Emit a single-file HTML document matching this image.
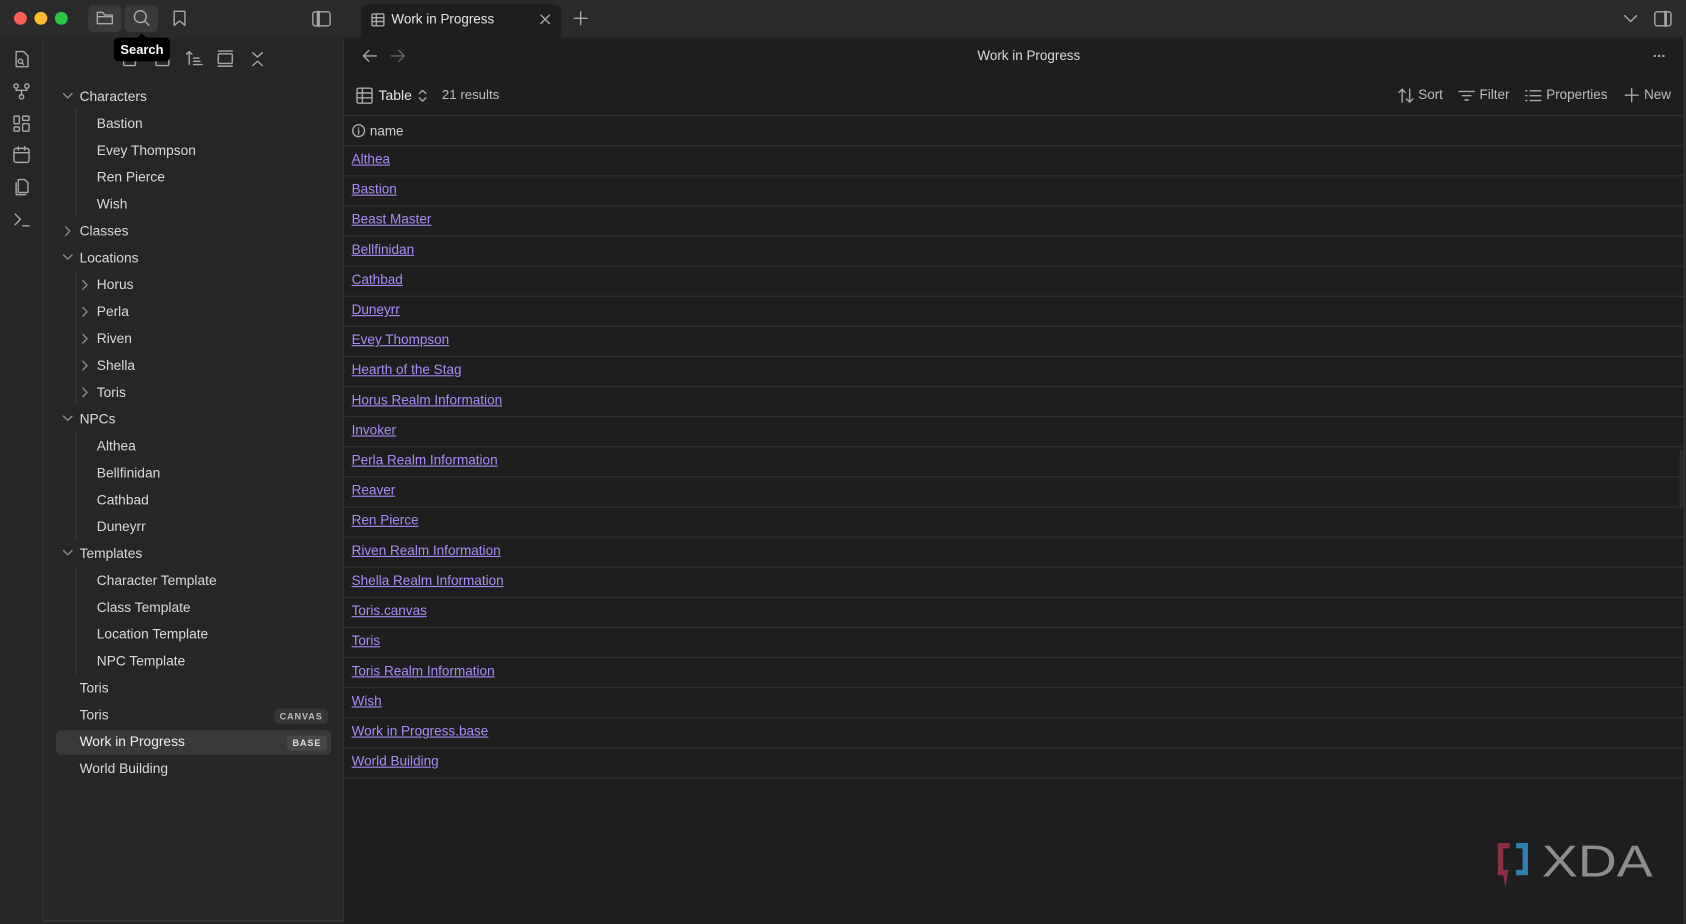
<!DOCTYPE html>
<html><head><meta charset="utf-8"><style>
html,body{margin:0;padding:0;background:#1e1e1e;width:1686px;height:924px;overflow:hidden}
#w{position:absolute;left:0;top:0;width:1568px;height:859px;transform:scale(1.07526);transform-origin:0 0;font-family:"Liberation Sans",sans-serif;color:#dadada;font-size:13px;background:#262626}
.a{position:absolute}
svg{position:absolute;fill:none;stroke:#a8a8a8;stroke-width:1.3;stroke-linecap:round;stroke-linejoin:round}
.tree div{position:absolute;height:25px;line-height:25px;white-space:nowrap;font-size:12.8px}
.chev{stroke:#8a8a8a}
.row{position:absolute;left:320px;width:1246px;height:27px;border-bottom:1px solid #333}
.row a{position:absolute;left:7px;top:5px;color:#a98cf7;text-decoration:underline;font-size:12.6px}
.badge{position:absolute;font-size:8.5px;font-weight:bold;letter-spacing:.8px;color:#bbb;background:#363636;border-radius:4px;padding:2px 5px}
</style></head><body><div id="w">
<div class="a" style="left:0;top:0;width:1568px;height:35px;background:#2a2a2a"></div>
<div class="a" style="left:13px;top:11px;width:12px;height:12px;border-radius:6px;background:#fe5f57"></div>
<div class="a" style="left:32px;top:11px;width:12px;height:12px;border-radius:6px;background:#febc2e"></div>
<div class="a" style="left:51px;top:11px;width:12px;height:12px;border-radius:6px;background:#28c840"></div>
<div class="a" style="left:82px;top:5px;width:31px;height:25px;border-radius:5px;background:#3a3a3a"></div>
<div class="a" style="left:116px;top:5px;width:31px;height:25px;border-radius:5px;background:#3a3a3a"></div>
<svg style="left:89px;top:9px" width="17" height="16"><path d="M1.5 3.5v9.5h14v-8h-7l-2-2.5h-5zM1.5 6.5h14"/></svg>
<svg style="left:123px;top:8px" width="17" height="17"><circle cx="7.5" cy="7.5" r="5.5"/><path d="M11.5 11.5l4 4"/></svg>
<svg style="left:160px;top:9px" width="14" height="16"><path d="M2 1.5h10v13l-5-4-5 4z"/></svg>
<svg style="left:290px;top:10px" width="18" height="15"><rect x="1" y="1" width="16" height="13" rx="2"/><path d="M6 1v13" stroke-width="3"/></svg>
<div class="a" style="left:336px;top:4px;width:186px;height:31px;background:#1e1e1e;border-radius:6px 6px 0 0"></div>
<svg style="left:345px;top:12px" width="13" height="13"><rect x="1" y="1" width="11" height="11" rx="1"/><path d="M1 4.5h11M1 8h11M5 1v11"/></svg>
<div class="a" style="left:364px;top:11px;font-size:12.5px;color:#e6e6e6">Work in Progress</div>
<svg style="left:501px;top:12px" width="12" height="12"><path d="M2 2l8 8M10 2l-8 8"/></svg>
<svg style="left:533px;top:10px" width="14" height="14"><path d="M7 1v12M1 7h12"/></svg>
<svg style="left:1510px;top:13px" width="13" height="9"><path d="M1 1.5l5.5 5.5 5.5-5.5"/></svg>
<svg style="left:1538px;top:10px" width="17" height="15"><rect x="1" y="1" width="15" height="13" rx="2"/><path d="M11 1v13" stroke-width="2.5"/></svg>
<div class="a" style="left:0;top:35px;width:40px;height:824px;background:#262626;border-right:1px solid #333"></div>
<svg style="left:11px;top:46px" width="18" height="18"><path d="M4 2h7l4 4v10H4z"/><circle cx="8" cy="11" r="2"/><path d="M9.5 12.5l1.5 1.5"/></svg>
<svg style="left:11px;top:76px" width="18" height="18"><circle cx="4" cy="4" r="2"/><circle cx="14" cy="4" r="2"/><circle cx="9" cy="14" r="2"/><path d="M4 6v2h10V6M9 8v4"/></svg>
<svg style="left:11px;top:106px" width="18" height="18"><rect x="2" y="2" width="5" height="7" rx="1"/><rect x="10" y="2" width="6" height="4" rx="1"/><rect x="2" y="12" width="5" height="4" rx="1"/><rect x="10" y="9" width="6" height="7" rx="1"/></svg>
<svg style="left:11px;top:135px" width="18" height="18"><rect x="2" y="3" width="14" height="13" rx="2"/><path d="M2 7h14M6 1.5v3M12 1.5v3"/></svg>
<svg style="left:11px;top:165px" width="18" height="18"><path d="M6 2h6l3 3v9H6z"/><path d="M4 5v11h9"/></svg>
<svg style="left:11px;top:195px" width="18" height="18"><path d="M3 4l5 5-5 5M10 15h6"/></svg>
<div class="a" style="left:41px;top:35px;width:278px;height:821px;background:#262626;border-right:1px solid #333;border-bottom:1px solid #3a3a3a"></div>
<svg style="left:113px;top:46px" width="16" height="16"><rect x="2" y="2" width="11" height="13" rx="1"/></svg>
<svg style="left:143px;top:46px" width="16" height="16"><rect x="2" y="2" width="12" height="13" rx="1"/></svg>
<svg style="left:172px;top:46px" width="17" height="17"><path d="M4 14V2M1.5 4.5L4 2l2.5 2.5M8 8h5M8 11h6M8 14h8"/></svg>
<svg style="left:201px;top:46px" width="17" height="17"><rect x="2" y="4" width="13" height="9" rx="1"/><path d="M2 1.5h13M2 15.5h13"/></svg>
<svg style="left:232px;top:47px" width="15" height="16"><path d="M3 2l4.5 4 4.5-4M3 14l4.5-4 4.5 4"/></svg>
<div class="a" style="left:106px;top:35px;width:52px;height:22px;background:#000;border-radius:4px;color:#fff;font-size:12px;font-weight:bold;text-align:center;line-height:22px">Search</div>
<div class="a" style="left:127px;top:31px;width:0;height:0;border-left:5px solid transparent;border-right:5px solid transparent;border-bottom:5px solid #000"></div>
<div class="a" style="left:52px;top:679px;width:256px;height:23px;background:#393939;border-radius:5px"></div>
<div class="a" style="left:70px;top:100px;width:1px;height:102px;background:#3a3a3a"></div>
<div class="a" style="left:70px;top:252px;width:1px;height:125px;background:#3a3a3a"></div>
<div class="a" style="left:70px;top:402px;width:1px;height:100px;background:#3a3a3a"></div>
<div class="a" style="left:70px;top:527px;width:1px;height:100px;background:#3a3a3a"></div>
<div class="tree">
<div style="left:74px;top:77px">Characters</div>
<div style="left:90px;top:102px">Bastion</div>
<div style="left:90px;top:127px">Evey Thompson</div>
<div style="left:90px;top:152px">Ren Pierce</div>
<div style="left:90px;top:177px">Wish</div>
<div style="left:74px;top:202px">Classes</div>
<div style="left:74px;top:227px">Locations</div>
<div style="left:90px;top:252px">Horus</div>
<div style="left:90px;top:277px">Perla</div>
<div style="left:90px;top:302px">Riven</div>
<div style="left:90px;top:327px">Shella</div>
<div style="left:90px;top:352px">Toris</div>
<div style="left:74px;top:377px">NPCs</div>
<div style="left:90px;top:402px">Althea</div>
<div style="left:90px;top:427px">Bellfinidan</div>
<div style="left:90px;top:452px">Cathbad</div>
<div style="left:90px;top:477px">Duneyrr</div>
<div style="left:74px;top:502px">Templates</div>
<div style="left:90px;top:527px">Character Template</div>
<div style="left:90px;top:552px">Class Template</div>
<div style="left:90px;top:577px">Location Template</div>
<div style="left:90px;top:602px">NPC Template</div>
<div style="left:74px;top:627px">Toris</div>
<div style="left:74px;top:652px">Toris</div>
<div style="left:74px;top:677px;color:#f0f0f0">Work in Progress</div>
<div style="left:74px;top:702px">World Building</div>
</div>
<svg class="chev" style="left:58px;top:85px" width="10" height="8"><path d="M1 2l4 4 4-4"/></svg>
<svg class="chev" style="left:59px;top:210px" width="8" height="10"><path d="M2 1l4 4-4 4"/></svg>
<svg class="chev" style="left:58px;top:235px" width="10" height="8"><path d="M1 2l4 4 4-4"/></svg>
<svg class="chev" style="left:75px;top:260px" width="8" height="10"><path d="M2 1l4 4-4 4"/></svg>
<svg class="chev" style="left:75px;top:285px" width="8" height="10"><path d="M2 1l4 4-4 4"/></svg>
<svg class="chev" style="left:75px;top:310px" width="8" height="10"><path d="M2 1l4 4-4 4"/></svg>
<svg class="chev" style="left:75px;top:335px" width="8" height="10"><path d="M2 1l4 4-4 4"/></svg>
<svg class="chev" style="left:75px;top:360px" width="8" height="10"><path d="M2 1l4 4-4 4"/></svg>
<svg class="chev" style="left:58px;top:385px" width="10" height="8"><path d="M1 2l4 4 4-4"/></svg>
<svg class="chev" style="left:58px;top:510px" width="10" height="8"><path d="M1 2l4 4 4-4"/></svg>
<div class="badge" style="left:255px;top:659px">CANVAS</div>
<div class="badge" style="left:267px;top:684px;background:#474747;color:#ddd">BASE</div>
<div class="a" style="left:320px;top:35px;width:1246px;height:824px;background:#1e1e1e;border-right:1px solid #3a3a3a"></div>
<svg style="left:337px;top:46px" width="14" height="12"><path d="M13 6H1M6 1L1 6l5 5"/></svg>
<svg style="left:363px;top:46px" width="14" height="12" ><path d="M1 6h12M8 1l5 5-5 5" stroke="#666"/></svg>
<div class="a" style="left:909px;top:45px;font-size:12.5px;color:#dadada">Work in Progress</div>
<div class="a" style="left:1538px;top:51px;width:2px;height:2px;background:#aaa;box-shadow:4px 0 #aaa,8px 0 #aaa"></div>
<svg style="left:331px;top:81px" width="16" height="16"><rect x="1" y="1" width="14" height="14" rx="1.5"/><path d="M1 5.5h14M1 10h14M6 1v14"/></svg>
<div class="a" style="left:352px;top:81px;font-size:13px;color:#e6e6e6">Table</div>
<svg style="left:388px;top:82px" width="10" height="14"><path d="M2 5l3-3 3 3M2 9l3 3 3-3"/></svg>
<div class="a" style="left:411px;top:81px;font-size:12.3px;color:#bdbdbd">21 results</div>
<svg style="left:1299px;top:81px" width="17" height="16"><path d="M5 14V2M2 5l3-3 3 3M12 2v12M9 11l3 3 3-3"/></svg>
<div class="a" style="left:1319px;top:81px;font-size:12.5px;color:#bdbdbd">Sort</div>
<svg style="left:1356px;top:82px" width="16" height="14"><path d="M1 3h14M4 7h8M6.5 11h3"/></svg>
<div class="a" style="left:1376px;top:81px;font-size:12.5px;color:#bdbdbd">Filter</div>
<svg style="left:1418px;top:82px" width="17" height="14"><path d="M1 2.5h1M1 7h1M1 11.5h1M5 2.5h10M5 7h10M5 11.5h10"/></svg>
<div class="a" style="left:1438px;top:81px;font-size:12.5px;color:#bdbdbd">Properties</div>
<svg style="left:1510px;top:81px" width="15" height="15"><path d="M7.5 1.5v12M1.5 7.5h12"/></svg>
<div class="a" style="left:1529px;top:81px;font-size:12.5px;color:#bdbdbd">New</div>
<div class="a" style="left:320px;top:107px;width:1246px;height:1px;background:#333"></div>
<div class="row" style="top:108px"><svg style="left:7px;top:7px" width="13" height="13"><circle cx="6.5" cy="6.5" r="5.5"/><path d="M6.5 6v3.5M6.5 4v.2"/></svg><span class="a" style="left:24px;top:7px;font-size:12.5px;color:#cfcfcf">name</span></div>
<div class="row" style="top:136px"><a>Althea</a></div>
<div class="row" style="top:164px"><a>Bastion</a></div>
<div class="row" style="top:192px"><a>Beast Master</a></div>
<div class="row" style="top:220px"><a>Bellfinidan</a></div>
<div class="row" style="top:248px"><a>Cathbad</a></div>
<div class="row" style="top:276px"><a>Duneyrr</a></div>
<div class="row" style="top:304px"><a>Evey Thompson</a></div>
<div class="row" style="top:332px"><a>Hearth of the Stag</a></div>
<div class="row" style="top:360px"><a>Horus Realm Information</a></div>
<div class="row" style="top:388px"><a>Invoker</a></div>
<div class="row" style="top:416px"><a>Perla Realm Information</a></div>
<div class="row" style="top:444px"><a>Reaver</a></div>
<div class="row" style="top:472px"><a>Ren Pierce</a></div>
<div class="row" style="top:500px"><a>Riven Realm Information</a></div>
<div class="row" style="top:528px"><a>Shella Realm Information</a></div>
<div class="row" style="top:556px"><a>Toris.canvas</a></div>
<div class="row" style="top:584px"><a>Toris</a></div>
<div class="row" style="top:612px"><a>Toris Realm Information</a></div>
<div class="row" style="top:640px"><a>Wish</a></div>
<div class="row" style="top:668px"><a>Work in Progress.base</a></div>
<div class="row" style="top:696px"><a>World Building</a></div>
<div class="a" style="left:1562px;top:418px;width:4px;height:55px;background:#2c2c2c;border-radius:2px"></div>
<svg style="left:1390px;top:780px;stroke:none" width="150" height="48"><path d="M3 4h11v5H8v20h5l-3 16-2-11H3z" fill="#8c2f45"/><path d="M20 4h11v30H20v-5h6V9h-6z" fill="#2f7fb0"/><text x="44" y="35" font-family="Liberation Sans,sans-serif" font-size="41" fill="#8d8d8d" textLength="103" lengthAdjust="spacingAndGlyphs">XDA</text></svg>
</div></body></html>
